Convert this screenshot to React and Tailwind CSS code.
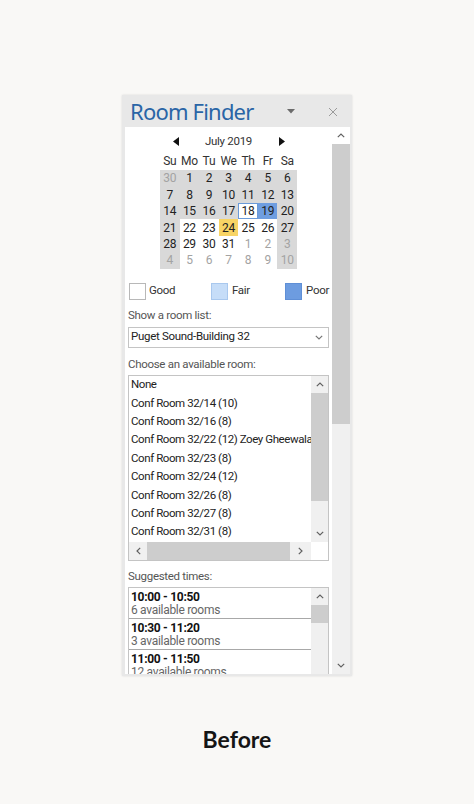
import React from "react";

const Up = ({ c = "#606060" }) => (
  <svg width="8" height="5" viewBox="0 0 8 5"><path d="M0.8 4.2 L4 1 L7.2 4.2" fill="none" stroke={c} strokeWidth="1.2" /></svg>
);
const Down = ({ c = "#606060" }) => (
  <svg width="8" height="5" viewBox="0 0 8 5"><path d="M0.8 0.8 L4 4 L7.2 0.8" fill="none" stroke={c} strokeWidth="1.2" /></svg>
);
const Left = () => (
  <svg width="5" height="8" viewBox="0 0 5 8"><path d="M4.2 0.8 L1 4 L4.2 7.2" fill="none" stroke="#606060" strokeWidth="1.2" /></svg>
);
const Right = () => (
  <svg width="5" height="8" viewBox="0 0 5 8"><path d="M0.8 0.8 L4 4 L0.8 7.2" fill="none" stroke="#606060" strokeWidth="1.2" /></svg>
);

const rows = [
  [[30, 1], [1], [2], [3], [4], [5], [6]],
  [[7], [8], [9], [10], [11], [12], [13]],
  [[14], [15], [16], [17], [18], [19], [20]],
  [[21], [22], [23], [24], [25], [26], [27]],
  [[28], [29], [30], [31], [1, 1], [2, 1], [3, 1]],
  [[4, 1], [5, 1], [6, 1], [7, 1], [8, 1], [9, 1], [10, 1]],
];

function cellClass(r, c, d) {
  if (d === 19) return "bg-[#6f9ee0]";
  if (d === 18 && r === 2) return "bg-white border border-[#6a9ad8]";
  if (d === 24 && r === 3) return "bg-[#f8d465]";
  if (c === 0 || c === 6 || r < 2 || (r === 2 && c < 4)) return "bg-[#d9d9d9]";
  return "bg-white";
}

const rooms = [
  "None",
  "Conf Room 32/14 (10)",
  "Conf Room 32/16 (8)",
  "Conf Room 32/22 (12) Zoey Gheewala",
  "Conf Room 32/23 (8)",
  "Conf Room 32/24 (12)",
  "Conf Room 32/26 (8)",
  "Conf Room 32/27 (8)",
  "Conf Room 32/31 (8)",
];

const times = [
  ["10:00 - 10:50", "6 available rooms"],
  ["10:30 - 11:20", "3 available rooms"],
  ["11:00 - 11:50", "12 available rooms"],
];

export default function App() {
  return (
    <div className="w-[474px] h-[804px] bg-[#f9f8f6] flex flex-col items-start font-['Noto_Sans',sans-serif] overflow-hidden">
      <div className="ml-[122px] mt-[95px] w-[230px] h-[581px] bg-[#e8e8e8] flex flex-col shadow-[0_0_2px_rgba(0,0,0,0.12)]">
        {/* header */}
        <div className="h-[32px] flex items-center shrink-0">
          <div className="pl-[8px] text-[22px] leading-none text-[#2a65a6] tracking-[-0.8px]">Room Finder</div>
          <div className="ml-auto mr-[33px] mt-[1px]">
            <svg width="8" height="5" viewBox="0 0 8 5"><path d="M0 0 L8 0 L4 4.5 Z" fill="#6b6b6b" /></svg>
          </div>
          <div className="mr-[14px] mt-[1px]">
            <svg width="10" height="10" viewBox="0 0 10 10"><path d="M1 1 L9 9 M9 1 L1 9" stroke="#9a9a9a" strokeWidth="1" /></svg>
          </div>
        </div>
        {/* body */}
        <div className="flex flex-1 min-h-0 ml-[3px] mr-[2px] mb-[2px]">
          <div className="w-[207px] bg-white flex flex-col px-[3px] overflow-hidden text-[11.5px] tracking-[-0.3px] font-['Roboto',sans-serif] text-[#222]">
            {/* calendar nav */}
            <div className="mt-[6px] h-[18px] flex items-center justify-center">
              <svg width="6" height="9" viewBox="0 0 6 9" className="mr-[16px]"><path d="M6 0 L6 9 L0 4.5 Z" fill="#111" /></svg>
              <div className="w-[68px] text-center text-[#333]">July 2019</div>
              <svg width="6" height="9" viewBox="0 0 6 9" className="ml-[16px]"><path d="M0 0 L0 9 L6 4.5 Z" fill="#111" /></svg>
            </div>
            <div className="mt-[2px] mx-auto w-[137px] grid grid-cols-7 h-[18px] items-center text-[12px] text-[#333]">
              {["Su", "Mo", "Tu", "We", "Th", "Fr", "Sa"].map((d) => (
                <div key={d} className="text-center">{d}</div>
              ))}
            </div>
            <div className="mx-auto w-[137px] grid grid-cols-7 text-[12px]">
              {rows.map((row, r) =>
                row.map(([d, o], c) => (
                  <div
                    key={r + "-" + c}
                    className={"h-[16.4px] flex items-center justify-center leading-none " + cellClass(r, c, d) + (o ? " text-[#a3a3a3]" : " text-[#222]")}
                  >
                    {d}
                  </div>
                ))
              )}
            </div>
            {/* legend */}
            <div className="mt-[14px] flex items-center h-[17px] shrink-0 text-[#333]">
              <div className="w-[83px] pl-[1px] flex items-center">
                <div className="w-[17px] h-[17px] border border-[#b8b8b8] bg-white" />
                <div className="ml-[3px]">Good</div>
              </div>
              <div className="w-[74px] flex items-center">
                <div className="w-[17px] h-[17px] border border-[#a9c8ee] bg-[#c6ddf8]" />
                <div className="ml-[4px]">Fair</div>
              </div>
              <div className="flex items-center">
                <div className="w-[17px] h-[17px] border border-[#5f8fd6] bg-[#6d9ce0]" />
                <div className="ml-[4px]">Poor</div>
              </div>
            </div>
            <div className="mt-[8px] h-[16px] shrink-0 flex items-center text-[#555]">Show a room list:</div>
            <div className="mt-[3px] h-[21px] shrink-0 border border-[#c4c4c4] flex items-center pl-[2px] pr-[5px]">
              <span>Puget Sound-Building 32</span>
              <span className="ml-auto"><Down c="#777" /></span>
            </div>
            <div className="mt-[9px] h-[16px] shrink-0 flex items-center text-[#555]">Choose an available room:</div>
            <div className="mt-[2px] h-[186px] border border-[#c4c4c4] flex flex-col shrink-0">
              <div className="flex h-[166px]">
                <div className="flex-1 overflow-hidden tracking-[-0.42px]">
                  {rooms.map((r) => (
                    <div key={r} className="h-[18.4px] flex items-center pl-[2px] whitespace-nowrap">{r}</div>
                  ))}
                </div>
                <div className="w-[17px] bg-[#f0f0f0] flex flex-col">
                  <div className="h-[17px] flex items-center justify-center"><Up /></div>
                  <div className="h-[108px] bg-[#cdcdcd]" />
                  <div className="flex-1" />
                  <div className="h-[17px] flex items-center justify-center"><Down /></div>
                </div>
              </div>
              <div className="flex flex-1">
                <div className="flex-1 bg-[#f0f0f0] flex items-center">
                  <div className="w-[18px] flex justify-center"><Left /></div>
                  <div className="w-[143px] h-full bg-[#cdcdcd]" />
                  <div className="flex-1 flex justify-center"><Right /></div>
                </div>
                <div className="w-[17px] bg-white" />
              </div>
            </div>
            <div className="mt-[8px] h-[16px] shrink-0 flex items-center text-[#555]">Suggested times:</div>
            <div className="mt-[2px] border border-[#c4c4c4] flex shrink-0 h-[100px]">
              <div className="flex-1 flex flex-col">
                {times.map(([t, s]) => (
                  <div key={t} className="h-[31px] border-b border-[#a8a8a8] pl-[2px] pt-[3px] flex flex-col">
                    <div className="font-bold text-[12px] leading-[13px] text-[#111]">{t}</div>
                    <div className="text-[12px] leading-[13px] text-[#666]">{s}</div>
                  </div>
                ))}
              </div>
              <div className="w-[17px] bg-[#f0f0f0] flex flex-col">
                <div className="h-[17px] flex items-center justify-center"><Up /></div>
                <div className="h-[18px] bg-[#cdcdcd]" />
              </div>
            </div>
          </div>
          {/* outer scrollbar */}
          <div className="w-[18px] bg-[#f0f0f0] flex flex-col">
            <div className="h-[17px] flex items-center justify-center bg-white"><Up /></div>
            <div className="h-[280px] bg-[#cdcdcd]" />
            <div className="flex-1" />
            <div className="h-[17px] flex items-center justify-center"><Down /></div>
          </div>
        </div>
      </div>
      <div className="w-full mt-[46px] text-center text-[23px] font-bold text-[#151515] font-['Lato',sans-serif]">Before</div>
    </div>
  );
}
